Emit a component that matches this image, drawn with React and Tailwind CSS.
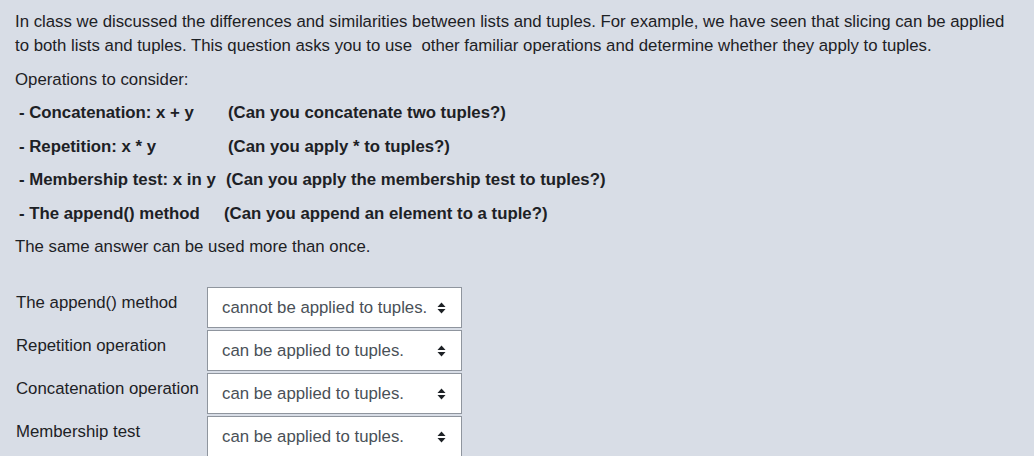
const items = [
  { op: "- Concatenation: x + y", w: "w-[209px]", q: "(Can you concatenate two tuples?)" },
  { op: "- Repetition: x * y", w: "w-[209px]", q: "(Can you apply * to tuples?)" },
  { op: "- Membership test: x in y", w: "w-[207px]", q: "(Can you apply the membership test to tuples?)" },
  { op: "- The append() method", w: "w-[205px]", q: "(Can you append an element to a tuple?)" },
];

const answers = [
  { label: "The append() method", value: "cannot be applied to tuples." },
  { label: "Repetition operation", value: "can be applied to tuples." },
  { label: "Concatenation operation", value: "can be applied to tuples." },
  { label: "Membership test", value: "can be applied to tuples." },
];

function SortArrows() {
  return (
    <svg width="9" height="12" viewBox="0 0 9 12" className="shrink-0">
      <path d="M4.5 0.5 L8.5 5 L0.5 5 Z" fill="#1d2125" />
      <path d="M4.5 11.5 L8.5 7 L0.5 7 Z" fill="#1d2125" />
    </svg>
  );
}

function FakeSelect({ value }) {
  return (
    <div className="w-[255px] h-[41px] bg-white border border-[#8f959e] flex items-center pl-[14px] pr-[15px] text-[#495057]">
      <span className="flex-1 whitespace-nowrap">{value}</span>
      <SortArrows />
    </div>
  );
}

export default function App() {
  return (
    <div
      className="w-[1034px] h-[456px] overflow-hidden bg-[#d8dde6] text-[#1d2125] text-[16.8px] leading-[24px]"
      style={{ fontFamily: '"Liberation Sans", Arial, sans-serif' }}
    >
      <div className="pl-[15px] pt-[10px] flex flex-col gap-[9.5px]">
        <p className="whitespace-nowrap">
          In class we discussed the differences and similarities between lists and tuples. For example, we have seen that slicing can be applied
          <br />
          to both lists and tuples. This question asks you to use&nbsp; other familiar operations and determine whether they apply to tuples.
        </p>
        <p>Operations to consider:</p>
        {items.map((it) => (
          <p key={it.op} className="font-bold pl-[4px] flex whitespace-nowrap">
            <span className={it.w}>{it.op}</span>
            <span>{it.q}</span>
          </p>
        ))}
        <p>The same answer can be used more than once.</p>
      </div>

      <div className="mt-[28px] pl-[16px] flex flex-col gap-[2px]">
        {answers.map((a) => (
          <div key={a.label} className="flex items-start">
            <div className="w-[191px] pt-[4px] whitespace-nowrap">{a.label}</div>
            <FakeSelect value={a.value} />
          </div>
        ))}
      </div>
    </div>
  );
}
